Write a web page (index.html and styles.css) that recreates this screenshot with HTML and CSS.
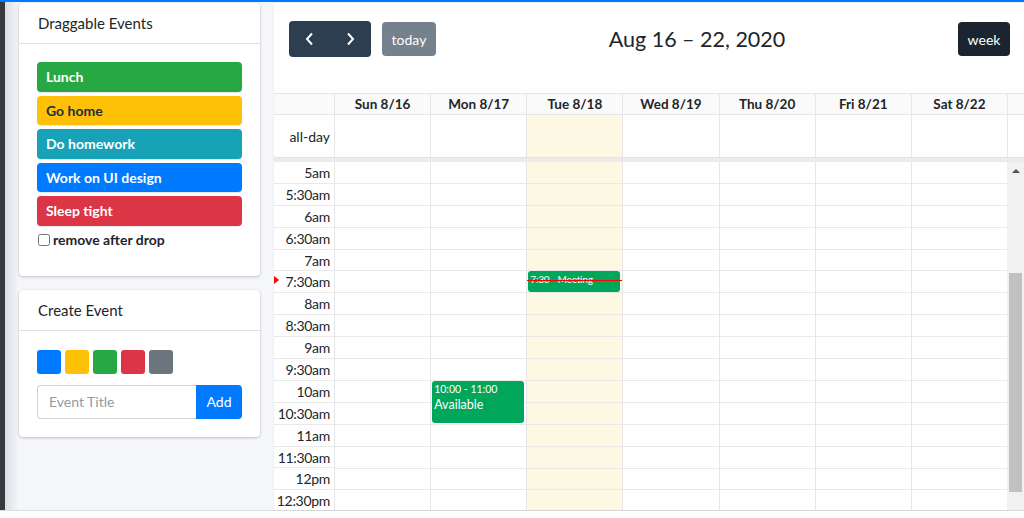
FILE: index.html
```html
<!DOCTYPE html>
<html lang="en">
<head>
<meta charset="utf-8">
<title>Calendar</title>
<link rel="stylesheet" href="styles.css">
</head>
<body>
<div class="topline"></div>
<div class="app">
  <div class="rail"></div>
  <aside class="side">
    <section class="card card-drag">
      <header class="card-head">Draggable Events</header>
      <div class="card-body">
        <div class="ext ext-success">Lunch</div>
        <div class="ext ext-warning">Go home</div>
        <div class="ext ext-info">Do homework</div>
        <div class="ext ext-primary">Work on UI design</div>
        <div class="ext ext-danger">Sleep tight</div>
        <label class="check"><input type="checkbox"><span>remove after drop</span></label>
      </div>
    </section>
    <section class="card card-create">
      <header class="card-head">Create Event</header>
      <div class="card-body">
        <div class="swatches">
          <span class="sw sw-primary"></span>
          <span class="sw sw-warning"></span>
          <span class="sw sw-success"></span>
          <span class="sw sw-danger"></span>
          <span class="sw sw-muted"></span>
        </div>
        <div class="input-group">
          <input type="text" class="ig-input" placeholder="Event Title">
          <button class="ig-btn">Add</button>
        </div>
      </div>
    </section>
  </aside>
  <main class="cal">
    <div class="toolbar">
      <div class="tb-left">
        <div class="btn-group">
          <button class="fc-btn nav-btn" aria-label="prev"><svg width="9" height="14" viewBox="0 0 9 14"><polyline points="7,1.5 2,7 7,12.5" fill="none" stroke="#fff" stroke-width="2"/></svg></button>
          <button class="fc-btn nav-btn" aria-label="next"><svg width="9" height="14" viewBox="0 0 9 14"><polyline points="2,1.5 7,7 2,12.5" fill="none" stroke="#fff" stroke-width="2"/></svg></button>
        </div>
        <button class="fc-btn today-btn">today</button>
      </div>
      <h2 class="title">Aug 16 – 22, 2020</h2>
      <button class="fc-btn week-btn">week</button>
    </div>
    <div class="row head">
      <div class="cell axis-cell"></div>
      <div class="cell hd">Sun 8/16</div>
      <div class="cell hd">Mon 8/17</div>
      <div class="cell hd">Tue 8/18</div>
      <div class="cell hd">Wed 8/19</div>
      <div class="cell hd">Thu 8/20</div>
      <div class="cell hd">Fri 8/21</div>
      <div class="cell hd">Sat 8/22</div>
      <div class="cell gutter"></div>
    </div>
    <div class="row allday">
      <div class="cell axis-cell ad-label">all-day</div>
      <div class="cell"></div>
      <div class="cell"></div>
      <div class="cell today"></div>
      <div class="cell"></div>
      <div class="cell"></div>
      <div class="cell"></div>
      <div class="cell"></div>
      <div class="cell gutter"></div>
    </div>
    <div class="divider"></div>
    <div class="body">
      <div class="tg">
        <div class="axis">
          <span class="now-arrow"></span>
          <div class="slot">5am</div>
          <div class="slot">5:30am</div>
          <div class="slot">6am</div>
          <div class="slot">6:30am</div>
          <div class="slot">7am</div>
          <div class="slot">7:30am</div>
          <div class="slot">8am</div>
          <div class="slot">8:30am</div>
          <div class="slot">9am</div>
          <div class="slot">9:30am</div>
          <div class="slot">10am</div>
          <div class="slot">10:30am</div>
          <div class="slot">11am</div>
          <div class="slot">11:30am</div>
          <div class="slot">12pm</div>
          <div class="slot">12:30pm</div>
        </div>
        <div class="day"></div>
        <div class="day">
          <div class="event ev-available"><span class="ev-time">10:00 - 11:00</span><span class="ev-title">Available</span></div>
        </div>
        <div class="day today">
          <div class="event ev-meeting"><span class="ev-time">7:30 - Meeting</span></div>
          <span class="now-line"></span>
        </div>
        <div class="day"></div>
        <div class="day"></div>
        <div class="day"></div>
        <div class="day"></div>
      </div>
      <div class="sb">
        <span class="sb-up"></span>
        <span class="sb-thumb"></span>
      </div>
    </div>
  </main>
</div>
<div class="bottom"></div>
</body>
</html>
```

FILE: styles.css
```css
* { box-sizing: border-box; }
html, body { margin: 0; padding: 0; }
body {
  width: 1024px;
  height: 518px;
  overflow: hidden;
  font-family: Lato, "Noto Sans", sans-serif;
  background: #f4f6f9;
  color: #212529;
}
button { font-family: inherit; }

.topline { height: 2px; background: #007bff; }

.app { display: flex; height: 508px; }
.rail { width: 5px; flex: none; background: #343a40; }
.side {
  width: 269px;
  flex: none;
  padding: 1px 14px 0;
  background: linear-gradient(to right, #dcdee2, #f4f6f9 14px);
  display: flex;
  flex-direction: column;
  gap: 14px;
}

.card {
  background: #fff;
  border-radius: 4px;
  box-shadow: 0 0 1px rgba(0,0,0,.125), 0 1px 3px rgba(0,0,0,.2);
}
.card-head {
  height: 41px;
  padding: 0 19px;
  display: flex;
  align-items: center;
  border-bottom: 1px solid rgba(0,0,0,.125);
  font-size: 15px;
  color: #212529;
}
.card-drag .card-body { padding: 18px 18px 26px; }
.card-create .card-body { padding: 19px 18px 18px; }

.ext {
  height: 29.5px;
  margin-bottom: 4px;
  padding: 0 9px;
  display: flex;
  align-items: center;
  border-radius: 4px;
  font-weight: 700;
  font-size: 14px;
  color: #fff;
  box-shadow: 0 1px 1px rgba(0,0,0,.1);
}
.ext-success { background: #28a745; }
.ext-warning { background: #ffc107; color: #1f2d3d; }
.ext-info { background: #17a2b8; }
.ext-primary { background: #007bff; }
.ext-danger { background: #dc3545; }

.check {
  height: 20px;
  display: flex;
  align-items: center;
  gap: 3px;
  font-weight: 700;
  font-size: 14px;
  color: #212529;
}
.check input { width: 12px; height: 12px; margin: 0 0 0 1px; }

.swatches { display: flex; gap: 4px; }
.sw { width: 24px; height: 24px; border-radius: 3px; }
.sw-primary { background: #007bff; }
.sw-warning { background: #ffc107; }
.sw-success { background: #28a745; }
.sw-danger { background: #dc3545; }
.sw-muted { background: #6c757d; }

.input-group { display: flex; margin-top: 11px; height: 34px; }
.ig-input {
  width: 159px;
  border: 1px solid #ced4da;
  border-right: none;
  border-radius: 4px 0 0 4px;
  padding: 0 11px;
  font-family: inherit;
  font-size: 14px;
  color: #495057;
  outline: none;
}
.ig-input::placeholder { color: #939ba2; }
.ig-btn {
  flex: 1;
  border: none;
  border-radius: 0 4px 4px 0;
  background: #007bff;
  color: #fff;
  font-size: 14px;
}

.cal {
  flex: 1;
  margin-top: 1px;
  height: 507px;
  background: #fff;
  display: flex;
  flex-direction: column;
  box-shadow: 0 0 1px rgba(0,0,0,.15);
}
.toolbar {
  height: 36px;
  margin: 18px 14px 36px 15px;
  display: flex;
  align-items: center;
  justify-content: space-between;
  flex: none;
}
.tb-left { display: flex; align-items: center; gap: 11px; }
.btn-group { display: flex; height: 36px; border-radius: 4px; overflow: hidden; }
.fc-btn {
  border: none;
  border-radius: 4px;
  color: #fff;
  font-size: 14px;
  padding: 0;
}
.nav-btn {
  width: 41px;
  height: 36px;
  border-radius: 0;
  background: #2c3e50;
  display: flex;
  align-items: center;
  justify-content: center;
}
.today-btn { width: 54px; height: 34px; background: #2c3e50; opacity: .65; }
.week-btn { width: 52px; height: 34px; background: #1a252f; }
.title { margin: 0; font-size: 21.5px; font-weight: 400; color: #212529; }

.row {
  display: grid;
  grid-template-columns: 60px repeat(7, 1fr) 17px;
  flex: none;
}
.cell { border-left: 1px solid #e6e6e6; }
.axis-cell { border-left: none; }
.head {
  height: 22px;
  border-top: 1px solid #e6e6e6;
  border-bottom: 1px solid #e6e6e6;
  background: #fafafa;
}
.hd {
  display: flex;
  align-items: center;
  justify-content: center;
  font-weight: 700;
  font-size: 13.5px;
}
.allday { height: 42px; }
.ad-label {
  display: flex;
  align-items: center;
  justify-content: flex-end;
  padding-right: 4px;
  font-size: 14px;
}
.today { background: #fcf8e3; }
.divider {
  height: 5px;
  flex: none;
  background: #ebebeb;
  border-top: 1px solid #e2e2e2;
}

.body { flex: 1; min-height: 0; display: flex; overflow: hidden; }
.tg {
  flex: 1;
  display: grid;
  grid-template-columns: 60px repeat(7, 1fr);
  align-items: start;
}
.axis { position: relative; }
.slot {
  height: 21.9px;
  border-bottom: 1px solid #e9e9e9;
  display: flex;
  align-items: center;
  justify-content: flex-end;
  padding-right: 4px;
  font-size: 14px;
  letter-spacing: -0.3px;
  white-space: nowrap;
}
.day {
  position: relative;
  height: 350.4px;
  border-left: 1px solid #e6e6e6;
  display: grid;
  grid-template-rows: repeat(16, 21.9px);
  background-image: repeating-linear-gradient(to bottom, transparent 0, transparent 20.9px, #e9e9e9 20.9px, #e9e9e9 21.9px);
}
.day.today { background-color: #fcf8e3; }

.event {
  background: #00a65a;
  border-radius: 3px;
  color: #fff;
  margin: 0 2px 1px 1px;
  padding: 1px 2px;
  display: flex;
  flex-direction: column;
  overflow: hidden;
}
.ev-meeting { grid-row: 6 / span 1; }
.ev-meeting .ev-time { font-size: 10px; letter-spacing: -0.2px; }
.ev-available { grid-row: 11 / span 2; margin-bottom: 2px; }
.ev-time { font-size: 10.5px; line-height: 15px; }
.ev-title { font-size: 12.5px; line-height: 16px; }

.now-line {
  position: absolute;
  left: 0;
  right: 0;
  top: 118px;
  border-top: 1px solid #ff0000;
}
.now-arrow {
  position: absolute;
  left: 0;
  top: 114px;
  width: 0;
  height: 0;
  border-top: 4px solid transparent;
  border-bottom: 4px solid transparent;
  border-left: 5px solid #ff0000;
}

.sb {
  width: 17px;
  flex: none;
  background: #f1f1f1;
  display: flex;
  flex-direction: column;
  align-items: center;
}
.sb-up {
  height: 17px;
  display: flex;
  align-items: center;
  justify-content: center;
}
.sb-up::before {
  content: "";
  border-left: 4px solid transparent;
  border-right: 4px solid transparent;
  border-bottom: 4px solid #505050;
}
.sb-thumb {
  width: 13px;
  height: 219px;
  margin-top: 94px;
  background: #c1c1c1;
}

.bottom {
  height: 8px;
  background: #fff;
  border-top: 1px solid #dcdcdc;
}
```
